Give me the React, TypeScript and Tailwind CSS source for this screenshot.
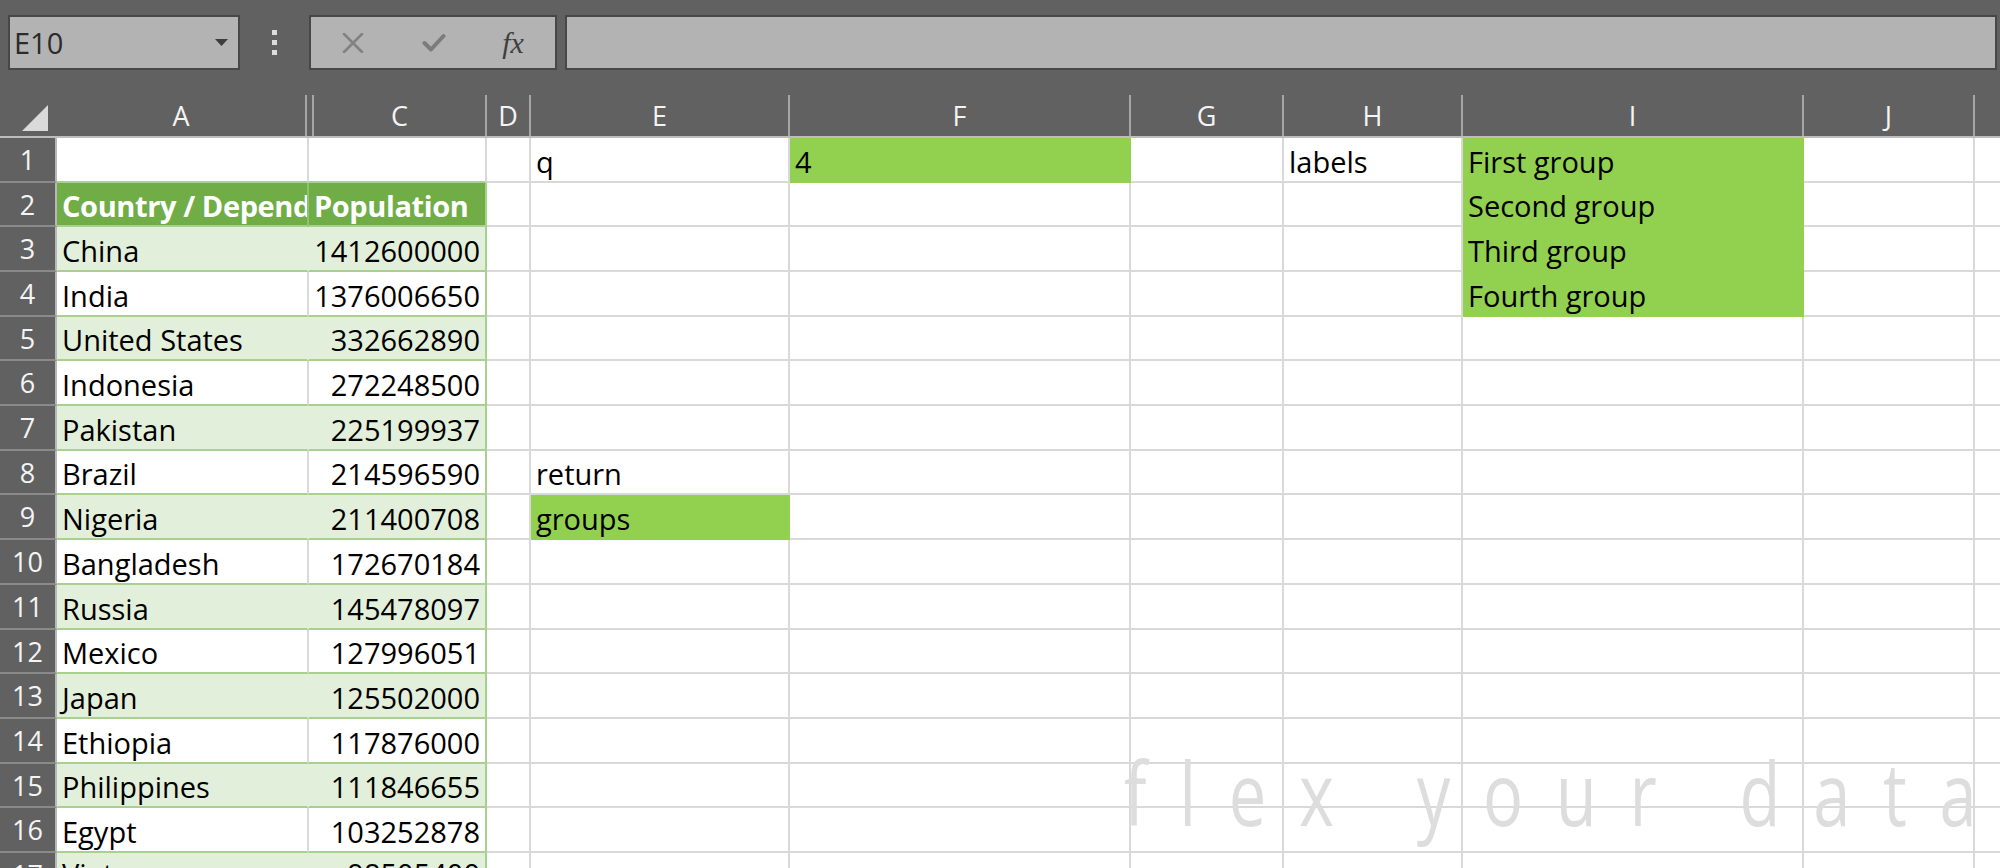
type Col = { key: string; w: string; hw: string };

// column widths measured off the sheet (hidden column B sits between A and C)
const COLS: Col[] = [
  { key: "A", w: "w-[252px]", hw: "w-[250px]" },
  { key: "C", w: "w-[178px]", hw: "w-[175px]" },
  { key: "D", w: "w-[44px]", hw: "w-[44px]" },
  { key: "E", w: "w-[259px]", hw: "w-[259px]" },
  { key: "F", w: "w-[341px]", hw: "w-[341px]" },
  { key: "G", w: "w-[153px]", hw: "w-[153px]" },
  { key: "H", w: "w-[179px]", hw: "w-[179px]" },
  { key: "I", w: "w-[341px]", hw: "w-[341px]" },
  { key: "J", w: "w-[171px]", hw: "w-[171px]" },
  { key: "K", w: "w-[40px]", hw: "w-[40px]" },
];

const HEIGHTS = [
  "h-[45px]", "h-[44px]", "h-[45px]", "h-[45px]", "h-[44px]", "h-[45px]",
  "h-[45px]", "h-[44px]", "h-[45px]", "h-[45px]", "h-[45px]", "h-[44px]",
  "h-[45px]", "h-[45px]", "h-[44px]", "h-[45px]", "h-[45px]",
];

const countries: [string, string][] = [
  ["China", "1412600000"],
  ["India", "1376006650"],
  ["United States", "332662890"],
  ["Indonesia", "272248500"],
  ["Pakistan", "225199937"],
  ["Brazil", "214596590"],
  ["Nigeria", "211400708"],
  ["Bangladesh", "172670184"],
  ["Russia", "145478097"],
  ["Mexico", "127996051"],
  ["Japan", "125502000"],
  ["Ethiopia", "117876000"],
  ["Philippines", "111846655"],
  ["Egypt", "103252878"],
  ["Vietnam", "98505400"],
];

const extra: Record<string, string> = {
  E1: "q",
  F1: "4",
  H1: "labels",
  I1: "First group",
  I2: "Second group",
  I3: "Third group",
  I4: "Fourth group",
  E8: "return",
  E9: "groups",
};

const FILLED = new Set(["F1", "I1", "I2", "I3", "I4", "E9"]);

function cellText(r: number, c: string): string {
  if (r === 2 && c === "A") return "Country / Dependency";
  if (r === 2 && c === "C") return "Population";
  if (r >= 3 && c === "A") return countries[r - 3]?.[0] ?? "";
  if (r >= 3 && c === "C") return countries[r - 3]?.[1] ?? "";
  return extra[c + r] ?? "";
}

function cellClass(r: number, c: string): string {
  let bg = "bg-white";
  let br = "border-r-[#d9d9d9]";
  let bb = "border-b-[#d9d9d9]";
  let txt = "text-black";
  const table = c === "A" || c === "C";
  if (table && r === 1) bb = "border-b-[#a9d08e]";
  if (table && r >= 2) {
    bb = "border-b-[#a9d08e]";
    if (r === 2) {
      bg = "bg-[#70ad47]";
      txt = "text-white font-bold tracking-[-0.4px]";
      br = c === "A" ? "border-r-[#8cc46a]" : "border-r-[#a9d08e]";
    } else if (r % 2 === 1) {
      bg = "bg-[#e2efda]";
      br = c === "A" ? "border-r-[#e2efda]" : "border-r-[#a9d08e]";
    } else {
      br = c === "A" ? "border-r-[#d9d9d9]" : "border-r-[#a9d08e]";
    }
  }
  if (FILLED.has(c + r)) {
    bg = "bg-[#92d050]";
    br = "border-r-[#92d050]";
    bb = "border-b-[#92d050]";
  }
  return `${bg} ${br} ${bb} ${txt}`;
}

function Toolbar() {
  return (
    <div className="h-[95px] flex items-start pt-[15px] pl-[8px]">
      <div className="w-[232px] h-[55px] border-2 border-[#474747] bg-[#b3b3b3] flex items-center pl-[4px] pr-[10px] shrink-0">
        <span className="text-[29px] text-[#2b2b2b] font-['Open_Sans'] leading-none flex-1">E10</span>
        <svg width="13" height="8" viewBox="0 0 13 8">
          <path d="M0 0 L13 0 L6.5 7 Z" fill="#3d3d3d" />
        </svg>
      </div>
      <div className="w-[69px] h-[55px] flex flex-col items-center justify-center gap-[5px] shrink-0">
        <div className="w-[5px] h-[5px] bg-[#dcdcdc]" />
        <div className="w-[5px] h-[5px] bg-[#dcdcdc]" />
        <div className="w-[5px] h-[5px] bg-[#dcdcdc]" />
      </div>
      <div className="w-[248px] h-[55px] border-2 border-[#474747] bg-[#b3b3b3] flex items-center shrink-0">
        <div className="w-[84px] flex justify-center">
          <svg width="22" height="20" viewBox="0 0 22 20">
            <path d="M2 1 L20 19 M20 1 L2 19" stroke="#828282" strokeWidth="2.6" strokeLinecap="round" />
          </svg>
        </div>
        <div className="w-[78px] flex justify-center">
          <svg width="24" height="20" viewBox="0 0 24 20">
            <path d="M2.5 10 L9 16.5 L21.5 3" fill="none" stroke="#7c7c7c" strokeWidth="4" strokeLinecap="round" strokeLinejoin="round" />
          </svg>
        </div>
        <div className="w-[80px] flex justify-center">
          <span className="font-['Liberation_Serif'] italic text-[30px] text-[#3f3f3f] leading-none">fx</span>
        </div>
      </div>
      <div className="ml-[8px] w-[1432px] h-[55px] border-2 border-[#474747] bg-[#b3b3b3] shrink-0" />
    </div>
  );
}

function ColumnHeader() {
  return (
    <div className="h-[43px] flex border-b-2 border-[#bdbdbd]">
      <div className="w-[57px] h-full shrink-0">
        <svg width="57" height="41" viewBox="0 0 57 41" className="block">
          <polygon points="22,36 48,36 48,10" fill="#dadada" />
        </svg>
      </div>
      {COLS.map((c) => (
        <div key={c.key} className="contents">
          {c.key === "C" && <div className="w-[5px] h-full shrink-0" />}
          <div
            className={`${c.hw} h-full shrink-0 flex items-center justify-center border-r-2 border-[#a6a6a6] ${
              c.key === "C" ? "border-l-2" : ""
            } text-[#f4f4f4] text-[27px] font-['Open_Sans'] leading-none`}
          >
            {c.key === "K" ? "" : c.key}
          </div>
        </div>
      ))}
    </div>
  );
}

function Sheet() {
  const rows = Array.from({ length: 17 }, (_, i) => i + 1);
  return (
    <div className="bg-white">
      {rows.map((r) => (
        <div key={r} className={`flex ${HEIGHTS[r - 1]}`}>
          <div className="w-[57px] shrink-0 bg-[#616161] border-b-2 border-[#8a8a8a] border-r-2 border-r-[#b8b8b8] flex items-center justify-center text-[27px] text-[#f4f4f4] font-['Open_Sans'] leading-none">
            {r}
          </div>
          {COLS.map((c) => {
            const text = cellText(r, c.key);
            const numeric = c.key === "C" && r >= 3;
            return (
              <div
                key={c.key}
                className={`${c.w} shrink-0 border-r-2 border-b-2 overflow-hidden whitespace-nowrap flex items-end ${
                  r === 17 ? "pb-[8px]" : "pb-[5px]"
                } ${numeric ? "justify-end pr-[5px]" : "pl-[5px]"} ${cellClass(r, c.key)} font-['Open_Sans'] text-[29px] leading-none`}
              >
                {text}
              </div>
            );
          })}
        </div>
      ))}
    </div>
  );
}

export default function App() {
  return (
    <div className="w-[2000px] h-[868px] overflow-hidden bg-[#616161] relative">
      <Toolbar />
      <ColumnHeader />
      <Sheet />
      <div className="absolute left-[1124px] top-[748px] whitespace-pre font-['Open_Sans'] font-normal text-[88px] leading-none text-[#dddddd] tracking-[43px] scale-x-[0.76] origin-left pointer-events-none">
        flex your data
      </div>
    </div>
  );
}
